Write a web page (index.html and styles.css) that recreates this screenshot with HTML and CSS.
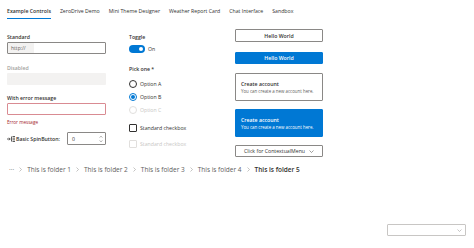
FILE: index.html
```html
<!DOCTYPE html>
<html lang="en">
<head>
  <meta charset="UTF-8">
  <title>Example Controls</title>
  <meta name="viewport" content="width=device-width, initial-scale=1.0">
  <link rel="stylesheet" href="styles.css">
</head>
<body>
  <nav class="pivot">
    <a class="pivot-link is-selected">Example Controls</a>
    <a class="pivot-link">ZeroDrive Demo</a>
    <a class="pivot-link">Mini Theme Designer</a>
    <a class="pivot-link">Weather Report Card</a>
    <a class="pivot-link">Chat Interface</a>
    <a class="pivot-link">Sandbox</a>
  </nav>

  <main class="controls">
    <!-- text fields -->
    <div class="col col-fields">
      <div class="field">
        <label class="label">Standard</label>
        <div class="textfield">
          <span class="prefix">http://</span>
          <input type="text">
        </div>
      </div>

      <div class="field">
        <label class="label is-disabled">Disabled</label>
        <div class="textfield is-disabled"></div>
      </div>

      <div class="field">
        <label class="label">With error message</label>
        <div class="textfield is-error"><input type="text"></div>
        <div class="error-text">Error message</div>
      </div>

      <div class="spin-row">
        <svg class="spin-icon" width="8" height="6" viewBox="0 0 16 12">
          <path d="M0 6h6M4 3.5l2.5 2.5L4 8.5M9 1v10M11 1h5M11 4.3h5M11 7.7h5M11 11h5" fill="none" stroke="#323130" stroke-width="1.6"/>
        </svg>
        <span class="spin-label">Basic SpinButton:</span>
        <div class="spinbox">
          <span>0</span>
          <svg width="4" height="8" viewBox="0 0 8 16">
            <path d="M1.5 5L4 2.5 6.5 5M1.5 11L4 13.5 6.5 11" fill="none" stroke="#605e5c" stroke-width="1.2"/>
          </svg>
        </div>
      </div>
    </div>

    <!-- toggle, choice group, checkboxes -->
    <div class="col col-choices">
      <label class="label">Toggle</label>
      <div class="toggle-row">
        <span class="toggle"><span class="knob"></span></span>
        <span>On</span>
      </div>

      <label class="label pick-label">Pick one *</label>
      <div class="radio-group">
        <div class="radio"><span class="circle"></span>Option A</div>
        <div class="radio is-checked"><span class="circle"></span>Option B</div>
        <div class="radio is-disabled"><span class="circle"></span>Option C</div>
      </div>

      <div class="checks">
        <div class="check"><span class="box"></span>Standard checkbox</div>
        <div class="check is-disabled"><span class="box"></span>Standard checkbox</div>
      </div>
    </div>

    <!-- buttons -->
    <div class="col col-buttons">
      <button class="btn">Hello World</button>
      <button class="btn btn-primary">Hello World</button>
      <button class="btn compound">
        <span class="title">Create account</span>
        <span class="desc">You can create a new account here.</span>
      </button>
      <button class="btn compound btn-primary">
        <span class="title">Create account</span>
        <span class="desc">You can create a new account here.</span>
      </button>
      <button class="btn menu-btn">
        Click for ContextualMenu
        <svg width="5" height="3" viewBox="0 0 10 6"><path d="M1 1l4 4 4-4" fill="none" stroke="#605e5c" stroke-width="1.2"/></svg>
      </button>
    </div>
  </main>

  <div class="breadcrumb">
    <span class="crumb overflow">···</span>
    <svg class="sep" width="3" height="5" viewBox="0 0 6 10"><path d="M1 1l4 4-4 4" fill="none" stroke="#8a8886" stroke-width="1"/></svg>
    <span class="crumb">This is folder 1</span>
    <svg class="sep" width="3" height="5" viewBox="0 0 6 10"><path d="M1 1l4 4-4 4" fill="none" stroke="#8a8886" stroke-width="1"/></svg>
    <span class="crumb">This is folder 2</span>
    <svg class="sep" width="3" height="5" viewBox="0 0 6 10"><path d="M1 1l4 4-4 4" fill="none" stroke="#8a8886" stroke-width="1"/></svg>
    <span class="crumb">This is folder 3</span>
    <svg class="sep" width="3" height="5" viewBox="0 0 6 10"><path d="M1 1l4 4-4 4" fill="none" stroke="#8a8886" stroke-width="1"/></svg>
    <span class="crumb">This is folder 4</span>
    <svg class="sep" width="3" height="5" viewBox="0 0 6 10"><path d="M1 1l4 4-4 4" fill="none" stroke="#8a8886" stroke-width="1"/></svg>
    <span class="crumb is-current">This is folder 5</span>
  </div>

  <div class="theme-dropdown">
    <svg width="5" height="3" viewBox="0 0 10 6"><path d="M1 1l4 4 4-4" fill="none" stroke="#a19f9d" stroke-width="1.2"/></svg>
  </div>
</body>
</html>
```

FILE: styles.css
```css
body {
  margin: 0;
  font-family: 'Open Sans', 'Noto Sans', sans-serif;
  font-size: 5.2px;
  color: #323130;
  background-color: #fff;
}

/* tabs */
.pivot {
  display: flex;
  padding: 4px 7px 0;
  height: 15px;
}

.pivot-link {
  display: inline-block;
  margin-right: 9px;
  line-height: 14px;
  border-bottom: 1px solid transparent;
  font-size: 5.2px;
  white-space: nowrap;
}

.pivot-link.is-selected {
  font-weight: 600;
  border-bottom-color: #0078d4;
}

/* columns */
.controls {
  display: flex;
  padding: 10px 0 0 7px;
}

.col {
  display: flex;
  flex-direction: column;
}

.col-fields {
  width: 99px;
  margin-right: 23px;
  padding-top: 4px;
}

.col-choices {
  width: 106px;
  padding-top: 4px;
}

.col-buttons {
  width: 88px;
}

.label {
  display: block;
  font-weight: 600;
  line-height: 8px;
  margin-bottom: 1px;
}

.label.is-disabled {
  color: #a19f9d;
}

.field {
  margin-bottom: 10px;
}

.field:nth-child(2) {
  margin-bottom: 9px;
}

.textfield {
  display: flex;
  height: 12px;
  border: 1px solid #8a8886;
  border-radius: 1px;
  box-sizing: border-box;
  overflow: hidden;
}

.textfield input {
  flex: 1;
  min-width: 0;
  border: none;
  outline: none;
  padding: 0;
  background: transparent;
}

.textfield .prefix {
  width: 26px;
  padding-left: 3px;
  box-sizing: border-box;
  background-color: #f3f2f1;
  color: #605e5c;
  line-height: 10px;
  font-size: 5px;
}

.textfield.is-disabled {
  border: none;
  background-color: #f3f2f1;
}

.textfield.is-error {
  border-color: #d98b92;
}

.error-text {
  margin-top: 4px;
  font-size: 4.6px;
  line-height: 7px;
  color: #a4262c;
}

.field:nth-child(3) {
  margin-bottom: 6px;
}

.spin-row {
  display: flex;
  align-items: center;
  height: 13px;
}

.spin-icon {
  margin-right: 1px;
}

.spin-label {
  flex: 1;
  font-weight: 600;
  white-space: nowrap;
}

.spinbox {
  display: flex;
  align-items: center;
  justify-content: space-between;
  width: 39px;
  height: 13px;
  padding: 0 2px 0 4px;
  border: 1px solid #8a8886;
  border-radius: 1px;
  box-sizing: border-box;
}

/* toggle */
.toggle-row {
  display: flex;
  align-items: center;
  margin-top: 3px;
  height: 8px;
}

.toggle {
  display: flex;
  justify-content: flex-end;
  align-items: center;
  width: 16px;
  height: 8px;
  padding: 0 2px;
  margin-right: 3px;
  border-radius: 4px;
  background-color: #0078d4;
  box-sizing: border-box;
}

.knob {
  width: 4px;
  height: 4px;
  border-radius: 50%;
  background-color: #fff;
}

.pick-label {
  margin-top: 12px;
}

/* radios */
.radio-group {
  margin-top: 3px;
}

.radio,
.check {
  display: flex;
  align-items: center;
  height: 13px;
}

.radio .circle {
  width: 8px;
  height: 8px;
  margin-right: 3px;
  border: 1px solid #323130;
  border-radius: 50%;
  box-sizing: border-box;
  position: relative;
}

.radio.is-checked .circle {
  border-color: #0078d4;
}

.radio.is-checked .circle::after {
  content: "";
  position: absolute;
  left: 1px;
  top: 1px;
  width: 4px;
  height: 4px;
  border-radius: 50%;
  background-color: #0078d4;
}

.radio.is-disabled {
  color: #c8c6c4;
}

.radio.is-disabled .circle {
  border-color: #e1dfdd;
}

/* checkboxes */
.checks {
  margin-top: 4px;
}

.check {
  height: 16px;
}

.check .box {
  width: 8px;
  height: 8px;
  margin-right: 3px;
  border: 1px solid #323130;
  border-radius: 1px;
  box-sizing: border-box;
}

.check.is-disabled {
  color: #c8c6c4;
}

.check.is-disabled .box {
  border-color: #e1dfdd;
}

/* buttons */
.btn {
  display: flex;
  align-items: center;
  justify-content: center;
  height: 13px;
  margin: 0;
  padding: 0 5px;
  border: 1px solid #8a8886;
  border-radius: 1px;
  background-color: #fff;
  color: #323130;
  font-family: inherit;
  font-size: 5.2px;
  font-weight: 600;
  box-sizing: border-box;
}

.btn-primary {
  margin-top: 10px;
  height: 12px;
  border-color: #0078d4;
  background-color: #0078d4;
  color: #fff;
}

.compound {
  flex-direction: column;
  align-items: flex-start;
  height: 28px;
  margin-top: 9px;
  text-align: left;
}

.compound.btn-primary {
  margin-top: 8px;
}

.compound .title {
  line-height: 7px;
}

.compound .desc {
  font-size: 4.4px;
  font-weight: 400;
  line-height: 6px;
  color: #605e5c;
}

.compound.btn-primary .desc {
  color: #fff;
}

.menu-btn {
  margin-top: 8px;
  height: 12px;
  gap: 4px;
  font-weight: 400;
}

/* breadcrumb */
.breadcrumb {
  display: flex;
  align-items: center;
  height: 12px;
  margin-top: 6px;
  padding-left: 9px;
  font-size: 6.5px;
  color: #605e5c;
  white-space: nowrap;
}

.sep {
  margin: 0 5px;
}

.crumb.is-current {
  color: #323130;
  font-weight: 600;
}

/* floating theme picker */
.theme-dropdown {
  position: fixed;
  right: 8px;
  bottom: 12px;
  display: flex;
  align-items: center;
  justify-content: flex-end;
  width: 79px;
  height: 12px;
  padding-right: 3px;
  border: 1px solid #c8c6c4;
  border-radius: 1px;
  box-sizing: border-box;
}
```
